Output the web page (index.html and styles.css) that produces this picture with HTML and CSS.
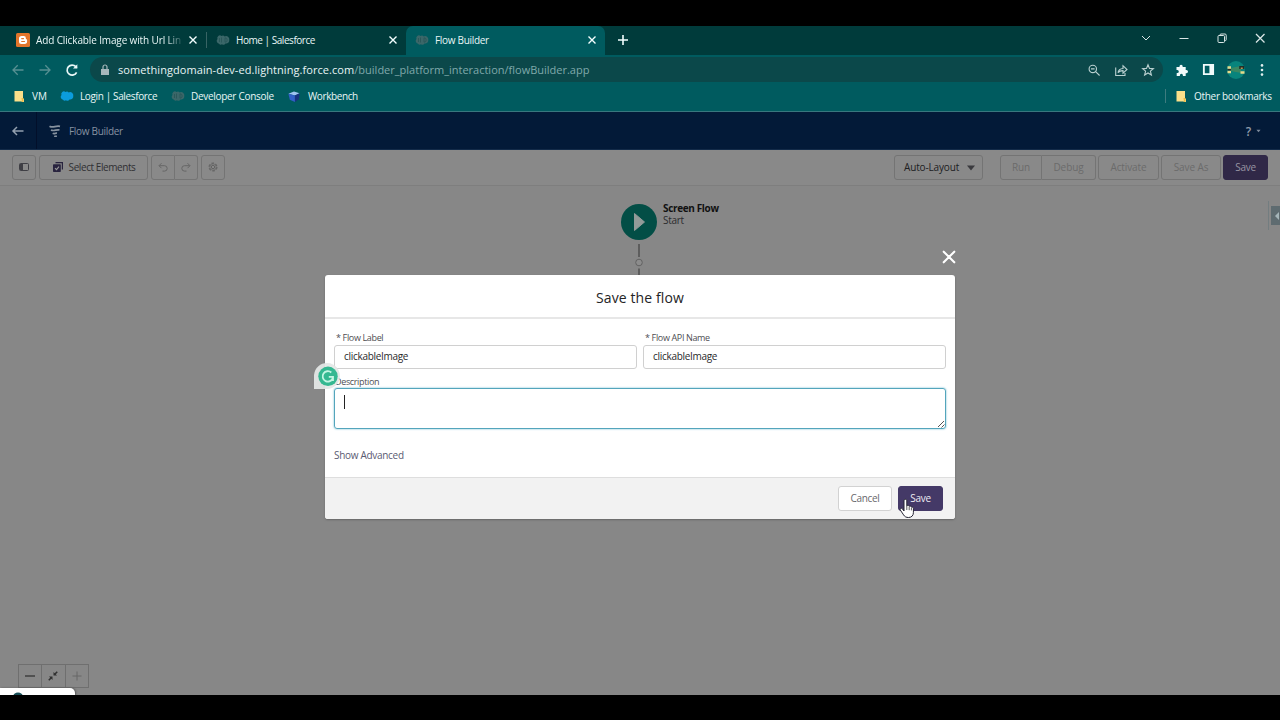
FILE: index.html
```html
<!DOCTYPE html>
<html lang="en">
<head>
<meta charset="utf-8">
<title>Flow Builder</title>
<link rel="stylesheet" href="styles.css">
</head>
<body>
<svg width="0" height="0" class="defs">
  <symbol id="x" viewBox="0 0 10 10"><path d="M1.500 1.500l7 7m0-7l-7 7" fill="none" stroke="currentColor" stroke-width="1.400"/></symbol>
  <symbol id="cloud" viewBox="0 0 14 12"><path d="M3 9.700a2.700 2.700 0 0 1-1.500-4.600A2.600 2.600 0 0 1 5.500 2a2.500 2.500 0 0 1 3.200.4A3.300 3.300 0 0 1 13.300 6 3.100 3.100 0 0 1 9.500 9.400 2.500 2.500 0 0 1 6 10.300 2.400 2.400 0 0 1 3 9.700z" fill="currentColor"/></symbol>
  <symbol id="rings" viewBox="0 0 14 12"><path d="M3 9.700a2.700 2.700 0 0 1-1.500-4.600A2.600 2.600 0 0 1 5.500 2a2.500 2.500 0 0 1 3.200.4A3.300 3.300 0 0 1 13.300 6 3.100 3.100 0 0 1 9.500 9.400 2.500 2.500 0 0 1 6 10.300 2.400 2.400 0 0 1 3 9.700z" fill="#3b6769"/><path d="M3.500 4v4M5.500 3.500v5M9 3.800a2.200 2.200 0 0 1 0 4.400z" fill="none" stroke="#275456" stroke-width=".8"/></symbol>
  <symbol id="note" viewBox="0 0 12 13"><path d="M1.500 1h8.500v7.500l1 .5v3h-2l-.5-.5h-7z" fill="#fae08a"/><path d="M8.500 8h2v4h-1.500z" fill="#e9bb4a"/></symbol>
</svg>
<div class="browser">
  <div class="tabs">
    <div class="tab">
      <svg class="fav blog" viewBox="0 0 14 14"><rect width="14" height="14" rx="1.500" fill="#e2752b"/><path d="M5.500 3h2a2.300 2.300 0 0 1 2.400 2.400c0 .8.300.8.800.9.400.1.400.4.400 2A2.600 2.600 0 0 1 8.500 11h-3A2.500 2.500 0 0 1 3 8.500v-3A2.500 2.500 0 0 1 5.500 3z" fill="#fff"/><path d="M5.700 5.600h1.800M5.700 8.500h2.800" stroke="#e2752b" stroke-width="1.200" stroke-linecap="round"/></svg>
      <span class="tab-name fade t1">Add Clickable Image with Url Lin</span>
      <svg class="close"><use href="#x"/></svg>
    </div>
    <div class="tab second">
      <svg class="fav"><use href="#rings"/></svg>
      <span class="tab-name t2">Home | Salesforce</span>
      <svg class="close"><use href="#x"/></svg>
    </div>
    <div class="tab active">
      <svg class="fav"><use href="#rings"/></svg>
      <span class="tab-name t3">Flow Builder</span>
      <svg class="close"><use href="#x"/></svg>
    </div>
    <svg class="plus" viewBox="0 0 12 12"><path d="M6 1v10M1 6h10" stroke="#f2ffff" stroke-width="1.600"/></svg>
    <div class="winctl">
      <svg viewBox="0 0 12 12"><path d="M2 4l4 4 4-4" /></svg>
      <svg viewBox="0 0 12 12"><path d="M1.500 6.500h9"/></svg>
      <svg viewBox="0 0 12 12"><path d="M2 4.500a1 1 0 0 1 1-1h4.500a1 1 0 0 1 1 1v5a1 1 0 0 1-1 1h-4.500a1 1 0 0 1-1-1zM4 3a1 1 0 0 1 1-1h4a1.200 1.200 0 0 1 1.200 1.200v4.500a1 1 0 0 1-1 1"/></svg>
      <svg viewBox="0 0 12 12"><path d="M2 2l8.500 8.500m0-8.500l-8.500 8.500" stroke-width="1.300"/></svg>
    </div>
  </div>
  <div class="nav">
    <svg class="nv dim" viewBox="0 0 14 14"><path d="M12.500 7h-10.500m4.700-4.700l-4.700 4.700 4.700 4.700"/></svg>
    <svg class="nv dim" viewBox="0 0 14 14"><path d="M1.500 7h10.500m-4.700-4.700l4.700 4.700-4.700 4.700"/></svg>
    <svg class="nv reload" viewBox="0 0 14 14"><path d="M11.600 9.300a5 5 0 1 1-.8-5.600l1 1.100"/><path d="M12.300 1.200v4.300h-4.300z" fill="currentColor" stroke="none"/></svg>
    <div class="omni">
      <svg class="lock" viewBox="0 0 10 12"><path d="M1 5h8v6h-8z" fill="#a6b7bb"/><path d="M3 5v-2a2 2 0 0 1 4 0v2" fill="none" stroke="#a6b7bb" stroke-width="1.200"/></svg>
      <span class="url"><b>somethingdomain-dev-ed.lightning.force.com</b><i>/builder_platform_interaction/flowBuilder.app</i></span>
      <svg class="oi" viewBox="0 0 14 14"><path d="M9.500 5.900a3.700 3.700 0 1 1-7.400 0 3.700 3.700 0 0 1 7.400 0zM8.600 8.600l4 3.900M4 5.900h3.600"/></svg>
      <svg class="oi" viewBox="0 0 14 14"><path d="M1.700 4.500v8h9.300v-2.500M4 9.700c.5-3 2-4 5-4.200v-2.800l4 3.800-4 3.700v-2.600c-2.500 0-4 .7-5 2.100z"/></svg>
      <svg class="oi" viewBox="0 0 14 14"><path d="M7 1.800l1.500 3.600 3.900.3-3 2.500 1 3.800-3.400-2-3.400 2 1-3.800-3-2.500 3.900-.3z"/></svg>
    </div>
    <svg class="ext" viewBox="0 0 14 14"><path d="M1.500 4h3v-.6a1.600 1.600 0 0 1 3.200 0v.6h3v3h.7a1.600 1.600 0 0 1 0 3.200h-.7v2.800h-2.800v-.7a1.500 1.500 0 0 0-3 0v.7h-3.200v-3h.6a1.500 1.500 0 0 0 0-3h-.8z" fill="#f1fbfb"/></svg>
    <svg class="side" viewBox="0 0 14 14"><path d="M1 1h12v12h-12zM3 3v8h5v-8z" fill="#f1fbfb" fill-rule="evenodd"/></svg>
    <svg class="avatar" viewBox="0 0 20 20"><circle cx="10" cy="10" r="9" fill="#08847c"/><path d="M5 8l10-2v7l-10-2z" fill="#668c4d" opacity=".55"/><path d="M1.500 7.500h3.500M1.500 12h3.500M14.500 12.500h4" stroke="#e5d98a" stroke-width="2.600"/><path d="M1.500 9.800h3.500M14 9v-2.300h3.500v2.300" stroke="#242d28" stroke-width="1.500" fill="#bc9a52"/></svg>
    <svg class="dots" viewBox="0 0 4 14"><g fill="#e1efef"><circle cx="2" cy="2.400" r="1.300"/><circle cx="2" cy="7" r="1.300"/><circle cx="2" cy="11.600" r="1.300"/></g></svg>
  </div>
  <div class="marks">
    <svg class="mk"><use href="#note"/></svg><span class="b1">VM</span>
    <svg class="mk wide blue"><use href="#cloud"/></svg><span class="b2">Login | Salesforce</span>
    <svg class="mk wide"><use href="#rings"/></svg><span class="b3">Developer Console</span>
    <svg class="mk cube" viewBox="0 0 14 14"><path d="M1 4l6-2.500 6 2-5 2.500z" fill="#9ec3f1"/><path d="M1 4l7 2v7l-5.500-2.500z" fill="#315fc8"/><path d="M8 6l5-2.500-.8 6.500-4.200 3z" fill="#17327f"/></svg><span class="b4">Workbench</span>
    <div class="other"><svg class="mk"><use href="#note"/></svg><span class="b5">Other bookmarks</span></div>
  </div>
</div>

<div class="app">
  <header class="head">
    <div class="back"><svg viewBox="0 0 14 14"><path d="M12.500 7h-10.500m4-4l-4 4 4 4" fill="none" stroke="#93a0af" stroke-width="1.500"/></svg></div>
    <svg class="flow" viewBox="0 0 14 14"><path d="M1.500 2.200c3.500 2.200 6-.8 10.500.2M3 6c3 1.600 5.500-.8 8.500 0M4.700 9.200c1.600 1 2.800-.3 4.300 0M6.300 12c.8.500 1.700.2 2.500 0" fill="none" stroke="#87929f" stroke-width="1.700"/></svg>
    <span class="title">Flow Builder</span>
    <span class="help">?</span><svg class="hc" viewBox="0 0 6 4"><path d="M.5.500h5l-2.500 3z" fill="#7d8a9c"/></svg>
  </header>
  <div class="bar">
    <div class="btn sq"><svg viewBox="0 0 12 12"><rect x="1.500" y="2.500" width="9" height="7" rx="1" fill="none" stroke="#3f3f45" stroke-width="1"/><path d="M2 3h3v6h-3z" fill="#3f3f45"/></svg></div>
    <div class="btn sel"><svg viewBox="0 0 12 12"><path d="M3.500 1h7.500v7.500h-1.200v-6.200h-6.300z" fill="#29243f"/><rect x="1" y="3.300" width="7.800" height="7.800" rx=".8" fill="#29243f"/><path d="M3 7.200l1.500 1.500 2.500-3" fill="none" stroke="#9a9a9a" stroke-width="1.100"/></svg><span>Select Elements</span></div>
    <div class="group undo">
      <div class="btn"><svg viewBox="0 0 12 12"><path d="M4.500 2.200l-2.500 2.500 2.500 2.500M2.200 4.700h5.300a2.700 2.700 0 0 1 0 5.400h-2"/></svg></div>
      <div class="btn"><svg viewBox="0 0 12 12"><path d="M7.500 2.200l2.500 2.500-2.500 2.500M9.800 4.700h-5.300a2.700 2.700 0 0 0 0 5.400h2"/></svg></div>
    </div>
    <div class="btn sq gear"><svg viewBox="0 0 12 12"><circle cx="6" cy="6" r="1.700" fill="none" stroke="#636363"/><circle cx="6" cy="6" r="3.800" fill="none" stroke="#666" stroke-width="1.500" stroke-dasharray="2.500 1.480"/><circle cx="6" cy="6" r="3.200" fill="none" stroke="#6c6c6c" stroke-width=".8"/></svg></div>
    <div class="btn layout"><span>Auto-Layout</span><svg viewBox="0 0 8 6"><path d="M0 .5h8l-4 5z" fill="#3a3a3e"/></svg></div>
    <div class="group run"><div class="btn off w41"><span>Run</span></div><div class="btn off w54"><span>Debug</span></div></div>
    <div class="btn off act"><span>Activate</span></div>
    <div class="btn off as"><span>Save As</span></div>
    <div class="btn save">Save</div>
  </div>
  <main class="canvas">
    <div class="node">
      <svg class="play" viewBox="0 0 36 36"><circle cx="18" cy="18" r="18" fill="#034e46"/><path d="M13.500 9.500v17l10-8.500z" fill="#929a98" stroke="#929a98" stroke-linejoin="round"/></svg>
      <div class="node-text"><strong>Screen Flow</strong><span>Start</span></div>
    </div>
    <svg class="line" viewBox="0 0 10 36"><path d="M5 4v13M5 28.500v7.500" stroke="#484848" stroke-width="1.300"/><circle cx="5" cy="22.500" r="3.300" fill="#8c8c8c" stroke="#626262"/></svg>
    <div class="panel-tab"><svg viewBox="0 0 11 19"><path d="M0 0h11v19H0z" fill="#5e6b70"/><path d="M8 6l-4 4 4 4z" fill="#a5b5b9"/></svg></div>
    <div class="zoom">
      <div><svg viewBox="0 0 12 12"><path d="M1 6h10" stroke="#353535" stroke-width="1.300"/></svg></div>
      <div><svg viewBox="0 0 12 12"><path d="M6.500 5.500v-3.500l1.200 1.200 2-2 1.100 1.100-2 2 1.200 1.200zM5.500 6.500v3.500l-1.200-1.200-2 2-1.100-1.100 2-2-1.200-1.200z" fill="#303030"/></svg></div>
      <div><svg viewBox="0 0 12 12"><path d="M6 1.500v9M1.500 6h9" stroke="#666"/></svg></div>
    </div>
    <div class="status"><svg viewBox="0 0 10 5"><path d="M0 5a5 4.500 0 0 1 10 0z" fill="#174e57"/></svg></div>
  </main>
</div>

<section class="modal">
  <svg class="mclose" viewBox="0 0 14 14"><path d="M1.700 1.700l10.600 10.600m0-10.600l-10.600 10.600" stroke="#fff" stroke-width="2.100" stroke-linecap="round"/></svg>
  <h1><span>Save the flow</span></h1>
  <div class="body">
    <div class="fields">
      <label><span class="lab l1">* Flow Label</span><span class="input"><span>clickableImage</span></span></label>
      <label><span class="lab l2">* Flow API Name</span><span class="input"><span>clickableImage</span></span></label>
    </div>
    <div class="lab desc"><span>Description</span></div>
    <div class="area"><span class="caret"></span><svg viewBox="0 0 8 8"><path d="M1 7l6-6M4.500 7.500l3-3" stroke="#555" stroke-width="1"/></svg></div>
    <a class="adv">Show Advanced</a>
  </div>
  <footer><div class="mb cancel"><span>Cancel</span></div><div class="mb ok">Save</div></footer>
  <svg class="gram" viewBox="0 0 28 28"><path d="M1 27v-14a13 13 0 1 1 13 14z" fill="#e4e7e6" opacity=".93"/><circle cx="15" cy="14.300" r="9.700" fill="#35b891"/><path d="M18.300 10.500a5.200 5.200 0 1 0 1.500 5.500M15.800 14.800h4.200v4.200" fill="none" stroke="#c4f5e3" stroke-width="1.800"/></svg>
  <svg class="hand" viewBox="0 0 16 21"><path d="M5 13v-10.300a1.400 1.400 0 0 1 2.800 0v5.200c.7-.9 2.200-.6 2.400.5.800-.6 2-.2 2.200.8.900-.3 2 .2 2 1.300v4.200c0 2.700-1.800 4.800-4.800 4.800-2.300 0-3.900-.7-5-2.600l-3.400-5c-.6-1.200 1-2.300 2-1.300z" fill="#fff" stroke="#252533" stroke-width="1"/><path d="M7.800 8v4M10.200 9v3.200M12.400 10v2.400" stroke="#333" stroke-width=".8"/></svg>
</section>
<div class="bottom"></div>
</body>
</html>
```
FILE: styles.css
```css
* { box-sizing: border-box; }
body { margin: 0; width: 1280px; height: 720px; overflow: hidden; position: relative; background: #000; padding-top: 26px; font: 10px/14px "Open Sans", "Noto Sans", sans-serif; letter-spacing: -.3px; color: #222; }
svg { display: block; flex: none; }
span, strong { white-space: nowrap; }
.defs { position: absolute; }
.browser { height: 86px; background: #005b5f; color: #e9f6f6; }
.tabs { height: 29px; background: #003b3b; display: flex; align-items: center; padding-left: 7px; padding-bottom: 1px; }
.tab { width: 199px; height: 28px; display: flex; align-items: center; padding: 0 8px 0 9px; }
.second { border-left: 1px solid #386465; height: 16px; width: 200px; }
.active { background: #005b5f; height: 30px; border-radius: 7px 7px 0 0; width: 199px; align-self: flex-start; padding-bottom: 2px; }
.fav { width: 14px; height: 12px; margin-right: 6px; }
.blog { height: 14px; }
.t1 { width: 146px; margin-right: 5px; letter-spacing: -.13px; }
.t2 { letter-spacing: -.46px; }
.fade { -webkit-mask-image: linear-gradient(90deg, #000 130px, transparent 148px); }
.close { width: 10px; height: 10px; margin-left: auto; color: #f4ffff; }
.plus { width: 12px; height: 12px; margin-left: 12px; }
.winctl { margin-left: auto; display: flex; gap: 26px; padding: 0 14px 4px 0; }
.winctl svg { width: 12px; height: 12px; fill: none; stroke: #d8e5e5; stroke-width: 1; }
.nav { height: 29px; display: flex; align-items: center; padding-left: 11px; }
.nv { width: 14px; height: 14px; margin-right: 13px; fill: none; stroke: currentColor; stroke-width: 1.300; color: #e9f8f8; }
.dim { color: #579092; }
.reload { stroke-width: 1.700; margin-right: 11px; }
.omni { width: 1073px; height: 25px; border-radius: 13px; background: #0b484a; display: flex; align-items: center; padding: 0 8px 0 10px; }
.lock { width: 10px; height: 12px; margin-right: 8px; }
.url { font-size: 11px; letter-spacing: .07px; margin-right: auto; display: flex; }
.url b { font-weight: 400; color: #e9f5f5; }
.url i { font-style: normal; letter-spacing: 0; color: #80a9aa; }
.oi { width: 14px; height: 14px; margin-left: 13px; fill: none; stroke: #bad0d0; stroke-width: 1.100; }
.ext { width: 14px; height: 14px; margin-left: 12px; }
.side { width: 13px; height: 13px; margin-left: 13px; }
.avatar { width: 20px; height: 20px; margin-left: 11px; }
.dots { width: 4px; height: 14px; margin-left: 14px; }
.marks { height: 28px; padding: 0 9px 3px 13px; display: flex; align-items: center; border-bottom: 1px solid #39777e; }
.mk { width: 12px; height: 13px; margin-right: 7px; }
.mk.wide { width: 14px; height: 12px; margin-right: 6px; }
.cube.mk { width: 14px; }
.blue { color: #0b9cdc; }
.b1 { width: 28px; letter-spacing: 0; }
.b2 { width: 91px; letter-spacing: -.37px; }
.b3 { width: 96px; }
.b4 { width: 60px; letter-spacing: -.4px; }
.b5 { width: 77px; letter-spacing: -.3px; }
.other { margin-left: auto; border-left: 1px solid #3e7c7f; height: 14px; display: flex; align-items: center; padding-left: 9px; }
.app { height: 583px; background: #878787; }
.head { height: 38px; background: #031a38; display: flex; align-items: center; border-bottom: 1px solid #132b49; }
.back { width: 37px; height: 37px; border-right: 1px solid #020f2a; display: flex; align-items: center; padding-left: 11px; }
.back svg { width: 14px; height: 14px; }
.flow { width: 14px; height: 14px; margin: 0 7px 0 11px; }
.title { color: #8793a2; font-size: 10px; padding-top: 1px; }
.help { margin-left: auto; color: #8f9bab; font: 600 12px/14px "Open Sans", sans-serif; padding-top: 2px; }
.hc { width: 5px; height: 4px; margin: 1px 19px 0 5px; }
.bar { height: 36px; background: #898989; border-bottom: 1px solid #7e7e7e; display: flex; align-items: center; padding: 0 12px 1px; }
.btn { height: 25px; border: 1px solid #747474; border-radius: 3px; display: flex; align-items: center; justify-content: center; color: #303033; }
.btn svg { width: 12px; height: 12px; }
.sq { width: 24px; }
.sel { width: 109px; margin: 0 3px 0 3px; gap: 5px; letter-spacing: -.43px; }
.group { display: flex; }
.group .btn:first-child { border-radius: 3px 0 0 3px; }
.group .btn + .btn { border-left: 0; border-radius: 0 3px 3px 0; }
.undo .btn { width: 24px; }
.undo .btn + .btn { width: 23px; }
.undo svg { fill: none; stroke: #666; stroke-width: 1; }
.gear { margin-left: 3px; }
.layout { margin-left: auto; width: 89px; padding: 0 7px 0 9px; justify-content: space-between; color: #202022; letter-spacing: -.15px; }
.btn.layout svg { width: 8px; height: 6px; margin-top: 2px; }
.run { margin-left: 17px; }
.off { color: #6b6b6b; letter-spacing: -.1px; }
.w41 { width: 42px; }
.w54 { width: 54px; }
.act { width: 61px; margin-left: 2px; }
.as { width: 60px; margin-left: 2px; }
.save { width: 45px; margin-left: 2px; background: #302847; color: #9895a3; border-color: #302847; }
.canvas { height: 509px; position: relative; padding: 18px 0 0 621px; }
.node { display: flex; height: 36px; }
.play { width: 36px; height: 36px; margin-right: 6px; }
.node-text { display: flex; flex-direction: column; line-height: 12px; margin-top: -2px; color: #2c2c2e; }
.node-text strong { color: #111; letter-spacing: -.35px; }
.line { width: 10px; height: 36px; margin-left: 13px; }
.panel-tab { position: absolute; right: 0; top: 15px; border-left: 1px solid #737d80; padding: 5px 0 5px 2px; width: 12px; overflow: hidden; }
.panel-tab svg { width: 11px; height: 19px; }
.zoom { position: absolute; left: 18px; top: 478px; display: flex; border: 1px solid #6f6f6f; height: 24px; width: 71px; }
.zoom div { flex: 1; display: flex; align-items: center; justify-content: center; }
.zoom div + div { border-left: 1px solid #6f6f6f; }
.zoom svg { width: 12px; height: 12px; }
.status { position: absolute; left: 0; bottom: 0; width: 75px; height: 7px; background: #fff; border-radius: 0 5px 0 0; padding: 4px 0 0 13px; overflow: hidden; box-shadow: 1px 0 2px #555; }
.status svg { width: 10px; height: 5px; }
.modal { position: absolute; left: 325px; top: 275px; width: 630px; height: 244px; background: #fff; border-radius: 3px; box-shadow: 0 1px 2px #666; }
.mclose { position: absolute; right: -1px; top: -25px; width: 14px; height: 14px; }
.modal h1 { margin: 0; height: 44px; border-bottom: 2px solid #e7e7e7; text-align: center; font: 400 14px/45px "Open Sans", sans-serif; letter-spacing: .12px; color: #242426; }
.body { height: 158px; padding: 12px 9px 0; }
.fields { display: flex; gap: 6px; }
label { width: 303px; display: block; }
.lab { display: block; font-size: 9px; line-height: 14px; height: 14px; color: #4e4e52; padding-left: 2px; letter-spacing: -.35px; }
.input { height: 24px; border: 1px solid #d0d0d0; border-radius: 3px; display: flex; align-items: center; padding: 0 0 2px 9px; color: #29292b; }
.desc { margin-top: 6px; padding-left: 1px; }
.area { height: 41px; width: 612px; border: 1.500px solid #54a5bc; border-radius: 3px; box-shadow: 0 0 2px #5db2ca; position: relative; padding: 6px 0 0 9px; margin-top: -1px; }
.caret { display: block; width: 1px; height: 14px; background: #222; }
.area svg { position: absolute; right: 0; bottom: 0; width: 8px; height: 8px; }
.adv { display: block; margin-top: 19px; color: #5a5a72; }
.modal footer { height: 42px; background: #f2f2f2; border-top: 1px solid #dedede; border-radius: 0 0 3px 3px; display: flex; gap: 6px; justify-content: flex-end; padding: 8px 12px 0 0; }
.mb { height: 25px; border: 1px solid #d2d2d2; border-radius: 3px; background: #fff; display: flex; align-items: center; justify-content: center; width: 54px; color: #67676c; padding-bottom: 2px; }
.mb.ok { width: 45px; background: #443967; border-color: #443967; color: #eeecf3; }
.gram { position: absolute; left: -12px; top: 87px; width: 28px; height: 28px; }
.hand { position: absolute; left: 574px; top: 223px; width: 16px; height: 21px; }
.bottom { height: 25px; background: #000; position: relative; }
```
